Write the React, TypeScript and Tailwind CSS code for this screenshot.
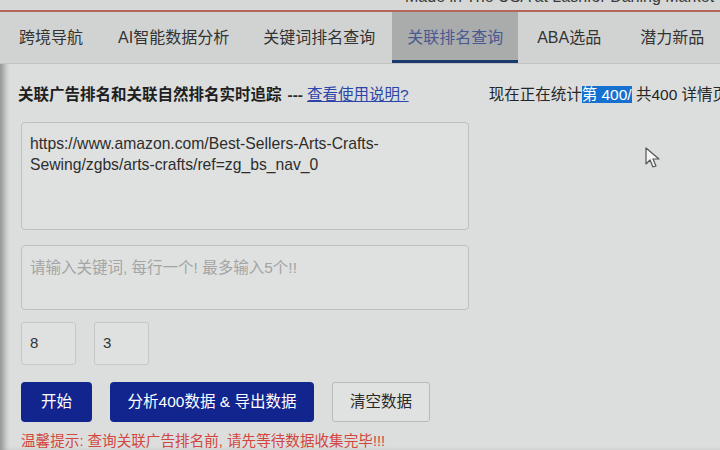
const tabs = ["跨境导航", "AI智能数据分析", "关键词排名查询", "关联排名查询", "ABA选品", "潜力新品"]

const Cursor = () => (
  <svg className="absolute left-[645px] top-[147px]" width="16" height="22" viewBox="0 0 16 22">
    <path d="M1 1 L1 17 L5 13 L8 20 L11 19 L8 12 L14 12 Z" fill="#f4f4f4" stroke="#555" strokeWidth="1.2" strokeLinejoin="round" />
  </svg>
)

export default function App() {
  return (
    <div className="relative w-[720px] h-[450px] overflow-hidden bg-[#dcdedd] text-[#2a2a2a] font-['Liberation_Sans','Noto_Sans_CJK_SC',sans-serif] shadow-[inset_7px_0_6px_-3px_rgba(0,0,0,0.35)]">
      {/* clipped banner above the nav */}
      <div className="h-[10px] overflow-hidden bg-[#d6d8d7]">
        <div className="pl-[405px] -mt-[13px] text-[16px] leading-[20px] text-[#3a3a3a] whitespace-nowrap">
          Made in The USA at Lashfor Darling Market
        </div>
      </div>
      <div className="h-[2px] bg-[#b2685c]" />

      <nav className="flex h-[52px] pl-[2px] bg-[#d1d3d2] border-b border-[#c2c4c3] whitespace-nowrap">
        {tabs.map((t, i) =>
          i === 3 ? (
            <div key={t} className="flex items-center px-[15px] bg-[#a9acab] text-[#4a5891] text-[16px] border-b-[3px] border-[#1d3a6e] pt-[3px]">
              {t}
            </div>
          ) : (
            <div key={t} className={`flex items-center text-[16px] text-[#333] ${i === 4 ? "px-[19px]" : i === 5 ? "px-[20px]" : i === 1 ? "pl-[18px] pr-[17px]" : "px-[17px]"}`}>
              {t}
            </div>
          )
        )}
      </nav>

      <div className="flex items-center mt-[20px] pl-[18px] text-[15.5px] leading-[22px] whitespace-nowrap">
        <span className="font-bold text-[#1e1e1e]">关联广告排名和关联自然排名实时追踪</span>
        <span className="ml-[6px] font-bold">---</span>
        <span className="ml-[4px] text-[#2b45a8] underline">查看使用说明?</span>
        <span className="ml-[80px] text-[#262626]">
          现在正在统计<span className="bg-[#1670cf] text-white">第 400/</span> 共400 详情页
        </span>
      </div>

      <div className="pl-[21px] pt-[16px]">
        <div className="w-[448px] h-[108px] rounded-[4px] border border-[#bfc1c0] bg-[#dfe1e0] px-[8px] pt-[10px] text-[15.7px] leading-[21px] text-[#2d2d2d]">
          <div>https://www.amazon.com/Best-Sellers-Arts-Crafts-</div>
          <div>Sewing/zgbs/arts-crafts/ref=zg_bs_nav_0</div>
        </div>

        <div className="mt-[15px] w-[448px] h-[65px] rounded-[4px] border border-[#bfc1c0] bg-[#dfe1e0] px-[8px] pt-[11px] text-[15.5px] leading-[21px] text-[#a3a5a4]">
          请输入关键词, 每行一个! 最多输入5个!!
        </div>

        <div className="flex gap-[18px] mt-[12px]">
          <div className="w-[55px] h-[43px] rounded-[3px] border border-[#c6c8c7] bg-[#dfe1e0] flex items-center pl-[8px] text-[15px] text-[#333]">8</div>
          <div className="w-[55px] h-[43px] rounded-[3px] border border-[#c6c8c7] bg-[#dfe1e0] flex items-center pl-[8px] text-[15px] text-[#333]">3</div>
        </div>

        <div className="flex gap-[18px] mt-[17px] text-[15.5px]">
          <div className="w-[71px] h-[40px] rounded-[4px] bg-[#12258f] text-white flex items-center justify-center">开始</div>
          <div className="w-[204px] h-[40px] rounded-[4px] bg-[#12258f] text-white flex items-center justify-center">分析400数据 &amp; 导出数据</div>
          <div className="w-[98px] h-[40px] rounded-[3px] border border-[#b8bab9] bg-[#e0e2e1] text-[#2a2a2a] flex items-center justify-center">清空数据</div>
        </div>

        <div className="mt-[9px] text-[14.6px] leading-[20px] text-[#d2473f] whitespace-nowrap">
          温馨提示: 查询关联广告排名前, 请先等待数据收集完毕!!!
        </div>
      </div>

      <Cursor />
    </div>
  )
}
